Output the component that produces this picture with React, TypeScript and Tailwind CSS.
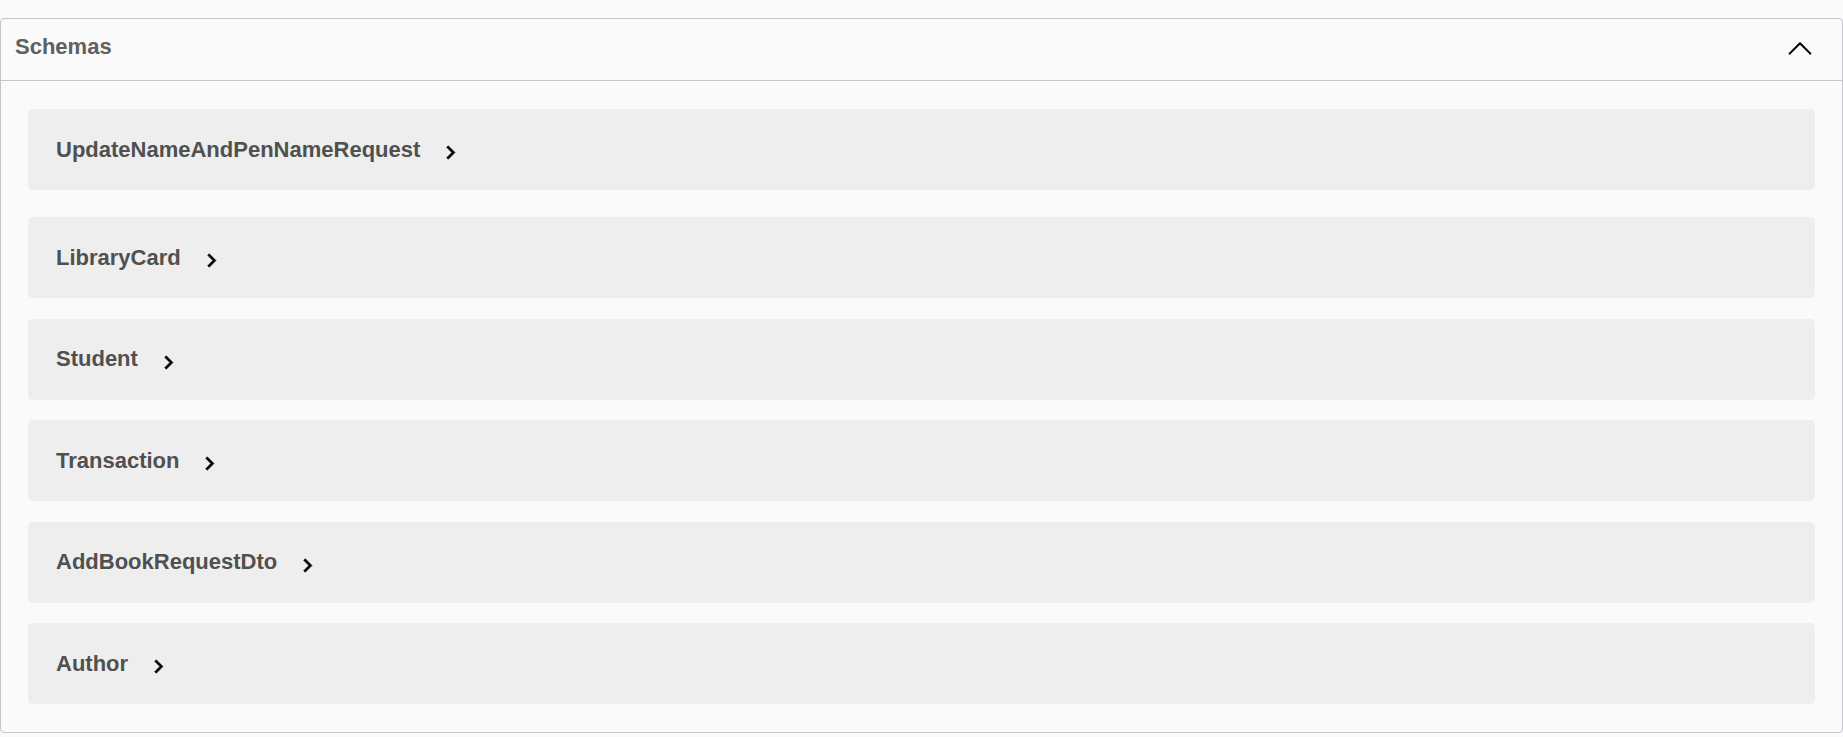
const schemas = [
	"UpdateNameAndPenNameRequest",
	"LibraryCard",
	"Student",
	"Transaction",
	"AddBookRequestDto",
	"Author",
];

function ChevronRight() {
	return (
		<svg
			viewBox="0 0 24 24"
			className="w-[27px] h-[27px] ml-[17px] mt-[6px] shrink-0"
			fill="#000"
			stroke="#000"
			strokeWidth="0.5"
		>
			<path d="M10 6L8.59 7.41 13.17 12l-4.58 4.59L10 18l6-6z" />
		</svg>
	);
}

function ChevronUp() {
	return (
		<svg viewBox="0 0 20 20" className="w-[30px] h-[30px] shrink-0" fill="#000">
			<path d="M17.418 14.908c-.272.271-.709.271-.979 0L10 8.47l-6.44 6.438c-.27.271-.708.271-.979 0-.27-.27-.27-.707 0-.979l6.93-6.93c.27-.271.708-.271.979 0l6.929 6.93c.272.27.272.708-.001.979z" />
		</svg>
	);
}

export default function App() {
	return (
		<main className="min-h-screen bg-[#fafafa] pt-[18px] font-['Liberation_Sans',Arial,sans-serif]">
			<section className="border border-[#c4c5c9] rounded-[4px]">
				{/* Header */}
				<div className="h-[62px] flex items-center justify-between pl-[14px] pr-[27px] pb-[6px] border-b border-[#c4c5c9]">
					<h4 className="text-[22px] font-bold text-[#606060] leading-[1.15]">
						Schemas
					</h4>
					<ChevronUp />
				</div>

				{/* Schema list */}
				<div className="flex flex-col px-[27px] pt-[28px] pb-[28px]">
					{schemas.map((name, i) => (
						<div
							key={name}
							className={
								i === 0
									? "h-[81px] bg-[#eeeeee] rounded-[5px] flex items-center pl-[28px] mb-[27px]"
									: i === schemas.length - 1
										? "h-[81px] bg-[#eeeeee] rounded-[5px] flex items-center pl-[28px]"
										: "h-[81px] bg-[#eeeeee] rounded-[5px] flex items-center pl-[28px] mb-[20.5px]"
							}
						>
							<span className="text-[22px] font-bold text-[#505050] leading-[1.15]">
								{name}
							</span>
							<ChevronRight />
						</div>
					))}
				</div>
			</section>
		</main>
	);
}
